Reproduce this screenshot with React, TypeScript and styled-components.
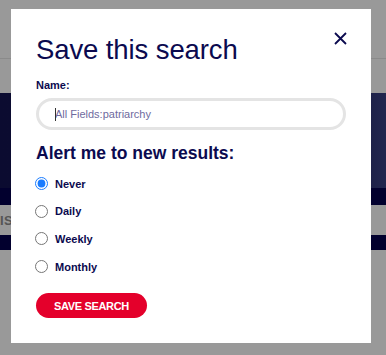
import React from "react";
import styled, { createGlobalStyle } from "styled-components";

const GlobalStyle = createGlobalStyle`
  html, body {
    margin: 0;
    padding: 0;
    background: #ffffff;
    font-family: "Liberation Sans", Arial, Helvetica, sans-serif;
  }
  #root {
    position: relative;
    width: 386px;
    height: 355px;
    overflow: hidden;
  }
`;

const Page = styled.div`
  display: flex;
  flex-direction: column;
  width: 386px;
  height: 355px;
  background: #ffffff;
`;

const Header = styled.div`
  height: 58px;
  border-bottom: 1px solid #e6e6e6;
  flex-shrink: 0;
`;

const HeaderGap = styled.div`
  height: 34px;
  flex-shrink: 0;
`;

const Hero = styled.div`
  height: 95px;
  flex-shrink: 0;
  background: linear-gradient(90deg, #131350 0%, #151552 70%, #2a2f6e 92%, #3a4084 100%);
`;

const Band = styled.div<{ $h: number }>`
  height: ${(p) => p.$h}px;
  flex-shrink: 0;
  background: #04004e;
`;

const Tabs = styled.div`
  height: 30px;
  flex-shrink: 0;
  display: flex;
  align-items: center;
  font-size: 13px;
  font-weight: 700;
  color: #8e8e8e;
  letter-spacing: 0.5px;
`;

const Overlay = styled.div`
  position: absolute;
  inset: 0;
  background: rgba(0, 0, 0, 0.4);
  padding: 9px 0 0 11px;
  box-sizing: border-box;
`;

const Modal = styled.div`
  position: relative;
  width: 360px;
  box-sizing: border-box;
  background: #ffffff;
  padding: 25px 25px 25px 25px;
  color: #0b0a4f;
`;

const Close = styled.button`
  position: absolute;
  top: 22px;
  right: 24px;
  width: 14px;
  height: 14px;
  padding: 0;
  border: 0;
  background: none;
  display: flex;
  align-items: center;
  justify-content: center;
  cursor: pointer;
`;

const Title = styled.h2`
  margin: 0;
  font-size: 27.5px;
  line-height: 32px;
  font-weight: 400;
  letter-spacing: -0.1px;
`;

const FieldLabel = styled.label`
  display: block;
  margin-top: 13px;
  font-size: 11px;
  line-height: 13px;
  font-weight: 700;
`;

const InputWrap = styled.div`
  position: relative;
  margin-top: 6px;
  &::before {
    content: "";
    position: absolute;
    left: 19px;
    top: 10px;
    width: 1px;
    height: 13px;
    background: #333333;
  }
`;

const TextInput = styled.input`
  display: block;
  width: 100%;
  height: 32px;
  box-sizing: border-box;
  border: 3px solid #e4e4e4;
  border-radius: 16px;
  padding: 0 0 0 16px;
  font-family: inherit;
  font-size: 11px;
  color: #6f6a9e;
  outline: none;
  background: #ffffff;
`;

const Subtitle = styled.h3`
  margin: 13px 0 0 0;
  font-size: 17.5px;
  line-height: 21px;
  font-weight: 700;
`;

const Options = styled.div`
  display: flex;
  flex-direction: column;
  gap: 12.7px;
  margin-top: 12px;
`;

const Option = styled.label`
  display: flex;
  align-items: center;
  height: 15px;
  font-size: 11px;
  font-weight: 700;
  color: #0b0a4f;
`;

const Radio = styled.input`
  width: 13px;
  height: 13px;
  margin: 0 7px 0 -1px;
  accent-color: #1a7cff;
`;

const SaveButton = styled.button`
  margin-top: 19px;
  width: 111px;
  height: 25px;
  border: 0;
  border-radius: 13px;
  background: #e4002b;
  color: #ffffff;
  font-family: inherit;
  font-size: 11px;
  font-weight: 700;
  letter-spacing: -0.35px;
  padding: 0;
`;

const choices = ["Never", "Daily", "Weekly", "Monthly"];

export default function App(): React.ReactElement {
  return (
    <>
      <GlobalStyle />
      <Page>
        <Header />
        <HeaderGap />
        <Hero />
        <Band $h={17} />
        <Tabs>IS</Tabs>
        <Band $h={15} />
      </Page>
      <Overlay>
        <Modal>
          <Close aria-label="Close">
            <svg width="13" height="13" viewBox="0 0 13 13">
              <path d="M1 1 L12 12 M12 1 L1 12" stroke="#0b0a4f" strokeWidth="1.8" />
            </svg>
          </Close>
          <Title>Save this search</Title>
          <FieldLabel htmlFor="name">Name:</FieldLabel>
          <InputWrap>
            <TextInput id="name" defaultValue="All Fields:patriarchy" />
          </InputWrap>
          <Subtitle>Alert me to new results:</Subtitle>
          <Options>
            {choices.map((c) => (
              <Option key={c}>
                <Radio type="radio" name="alert" defaultChecked={c === "Never"} />
                {c}
              </Option>
            ))}
          </Options>
          <SaveButton>SAVE SEARCH</SaveButton>
        </Modal>
      </Overlay>
    </>
  );
}
